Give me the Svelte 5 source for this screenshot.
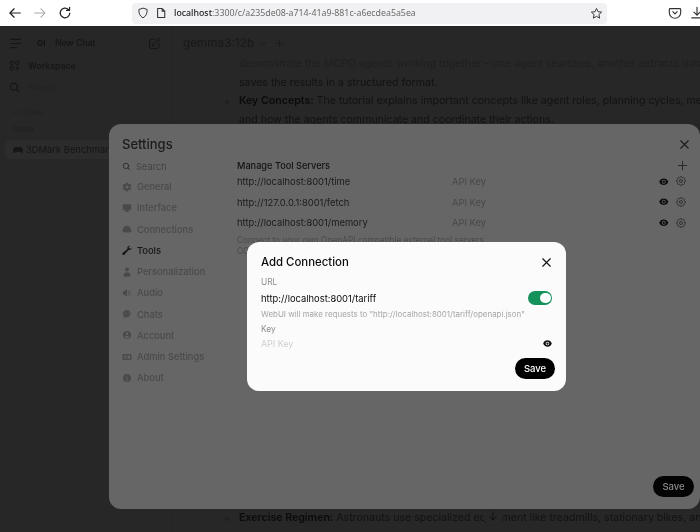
<script>
  const cog = "M7.84 1.804A1 1 0 0 1 8.82 1h2.36a1 1 0 0 1 .98.804l.331 1.652a6.993 6.993 0 0 1 1.929 1.115l1.598-.54a1 1 0 0 1 1.186.447l1.18 2.044a1 1 0 0 1-.205 1.251l-1.267 1.113a7.047 7.047 0 0 1 0 2.228l1.267 1.113a1 1 0 0 1 .206 1.25l-1.18 2.045a1 1 0 0 1-1.187.447l-1.598-.54a6.993 6.993 0 0 1-1.929 1.115l-.33 1.652a1 1 0 0 1-.98.804H8.82a1 1 0 0 1-.98-.804l-.331-1.652a6.993 6.993 0 0 1-1.929-1.115l-1.598.54a1 1 0 0 1-1.186-.447l-1.18-2.044a1 1 0 0 1 .205-1.251l1.267-1.114a7.05 7.05 0 0 1 0-2.227L1.821 7.773a1 1 0 0 1-.206-1.25l1.18-2.045a1 1 0 0 1 1.187-.447l1.598.54A6.992 6.992 0 0 1 7.51 3.456l.33-1.652ZM10 13a3 3 0 1 0 0-6 3 3 0 0 0 0 6Z";
  const nav = [
    { label: "General", d: cog },
    { label: "Interface", d: "M3 2.500h14A1.500 1.500 0 0 1 18.500 4v9a1.500 1.500 0 0 1-1.500 1.500h-4.500V16.500H14V18H6v-1.500h1.500v-2H3A1.500 1.500 0 0 1 1.500 13V4A1.500 1.500 0 0 1 3 2.500Z" },
    { label: "Connections", d: "M1 12.500A4.500 4.500 0 0 0 5.500 17H15a4 4 0 0 0 1.060-7.860 3.750 3.750 0 0 0-4.800-4.620 5 5 0 0 0-8.200 4.100A4.500 4.500 0 0 0 1 12.500Z" },
    { label: "Tools", active: true, d: "M19 5.500a4.500 4.500 0 0 1-4.790 4.490c-.85-.07-1.470.06-1.770.42l-7.150 8.690a2.550 2.550 0 1 1-3.590-3.590l8.690-7.150c.36-.3.49-.92.42-1.770A4.500 4.500 0 0 1 16.500 1.600l-3 3a.5.5 0 0 0 0 .7l2.200 2.200a.5.5 0 0 0 .7 0l2.300-2.300c.2.1.3.2.3.3Z" },
    { label: "Personalization", d: "M10 9a4 4 0 1 0 0-8 4 4 0 0 0 0 8ZM3 17.400a7 7 0 0 1 14 0 1 1 0 0 1-.5.9A15 15 0 0 1 10 19.500a15 15 0 0 1-6.500-1.200 1 1 0 0 1-.5-.9Z" },
    { label: "Audio", d: "M10 3.750a.75.75 0 0 0-1.260-.55L5.200 6.500H3.200c-.6 0-1.100.3-1.300.9A8 8 0 0 0 1.500 10c0 .9.15 1.800.4 2.600.2.6.7.9 1.300.9h2l3.540 3.300A.75.75 0 0 0 10 16.250V3.750ZM12.500 6.500a5 5 0 0 1 0 7l-1-1a3.600 3.600 0 0 0 0-5l1-1ZM15 4a8.500 8.500 0 0 1 0 12l-1-1a7 7 0 0 0 0-10l1-1Z" },
    { label: "Chats", evenodd: true, d: "M10 2c-4.420 0-8 3.360-8 7.500 0 1.700.6 3.260 1.620 4.520-.14.9-.6 1.900-1.400 2.700a.5.5 0 0 0 .38.83c1.700 0 3.100-.6 4.100-1.300.7.16 1.500.25 2.300.25 4.420 0 8-3.360 8-7S14.420 2 10 2ZM6.500 10.500a1 1 0 1 1 0-2 1 1 0 0 1 0 2Zm3.500 0a1 1 0 1 1 0-2 1 1 0 0 1 0 2Zm3.500 0a1 1 0 1 1 0-2 1 1 0 0 1 0 2Z" },
    { label: "Account", d: "M18 10a8 8 0 1 1-16 0 8 8 0 0 1 16 0Zm-5.500-2.500a2.500 2.500 0 1 1-5 0 2.500 2.500 0 0 1 5 0ZM10 12a5.990 5.990 0 0 0-4.790 2.400A6.480 6.480 0 0 0 10 16.500a6.480 6.480 0 0 0 4.790-2.100A5.990 5.990 0 0 0 10 12Z", evenodd: true },
    { label: "Admin Settings", d: "M2.500 4h15A1.500 1.500 0 0 1 19 5.500v9a1.500 1.500 0 0 1-1.500 1.500h-15A1.500 1.500 0 0 1 1 14.500v-9A1.500 1.500 0 0 1 2.500 4ZM4 7v2.500h5V7H4Zm0 4v2.500h5V11H4Zm7-4v6.500h5V7h-5Z", evenodd: true },
    { label: "About", d: "M18 10a8 8 0 1 1-16 0 8 8 0 0 1 16 0Zm-7-4a1 1 0 1 1-2 0 1 1 0 0 1 2 0ZM9 9a.75.75 0 0 0 0 1.500h.25v3.250H9a.75.75 0 0 0 0 1.500h2a.75.75 0 0 0 0-1.500h-.25V9.750A.75.75 0 0 0 10 9H9Z", evenodd: true }
  ];
  const servers = ["http://localhost:8001/time", "http://127.0.0.1:8001/fetch", "http://localhost:8001/memory"];
  const eyeA = "M10 12.5a2.5 2.5 0 1 0 0-5 2.5 2.5 0 0 0 0 5Z";
  const eyeB = "M.664 10.59a1.651 1.651 0 0 1 0-1.186A10.004 10.004 0 0 1 10 3c4.257 0 7.893 2.66 9.336 6.41.147.381.147.804 0 1.186A10.004 10.004 0 0 1 10 17c-4.257 0-7.893-2.66-9.336-6.41ZM14 10a4 4 0 1 1-8 0 4 4 0 0 1 8 0Z";
  const gear = "M10.343 3.94c.09-.542.56-.94 1.11-.94h1.093c.55 0 1.02.398 1.11.94l.149.894c.07.424.384.764.78.93.398.164.855.142 1.205-.108l.737-.527a1.125 1.125 0 0 1 1.45.12l.773.774c.39.389.44 1.002.12 1.45l-.527.737c-.25.35-.272.806-.107 1.204.165.397.505.71.93.78l.893.15c.543.09.94.559.94 1.109v1.094c0 .55-.397 1.02-.94 1.11l-.894.149c-.424.07-.764.383-.929.78-.165.398-.143.854.107 1.204l.527.738c.32.447.269 1.06-.12 1.45l-.774.773a1.125 1.125 0 0 1-1.449.12l-.738-.527c-.35-.25-.806-.272-1.203-.107-.398.165-.71.505-.781.929l-.149.894c-.09.542-.56.94-1.11.94h-1.094c-.55 0-1.019-.398-1.11-.94l-.148-.894c-.071-.424-.384-.764-.781-.93-.398-.164-.854-.142-1.204.108l-.738.527c-.447.32-1.06.269-1.45-.12l-.773-.774a1.125 1.125 0 0 1-.12-1.45l.527-.737c.25-.35.272-.806.108-1.204-.165-.397-.506-.71-.93-.78l-.894-.15c-.542-.09-.94-.56-.94-1.11v-1.094c0-.55.398-1.02.94-1.11l.894-.149c.424-.07.765-.383.93-.78.165-.398.143-.854-.108-1.204l-.526-.738a1.125 1.125 0 0 1 .12-1.45l.773-.773a1.125 1.125 0 0 1 1.45-.12l.737.527c.35.25.807.272 1.204.107.397-.165.71-.505.78-.929l.15-.894Z";
</script>

{#snippet eye(cls)}
  <svg class={cls} viewBox="0 0 20 20" fill="currentColor"><path d={eyeA} /><path fill-rule="evenodd" clip-rule="evenodd" d={eyeB} /></svg>
{/snippet}

{#snippet cross(cls)}
  <svg class={cls} viewBox="0 0 24 24" fill="none" stroke="currentColor" stroke-width="1.800" stroke-linecap="round"><path d="M6 6l12 12M18 6L6 18" /></svg>
{/snippet}

<div class="app">
  <header class="toolbar">
    <div class="tbtns">
      <svg class="ti" viewBox="0 0 16 16" fill="none" stroke="#222" stroke-width="1.400" stroke-linecap="round" stroke-linejoin="round"><path d="M14 8H2.500M7 3.200 2.200 8 7 12.800" /></svg>
      <svg class="ti" viewBox="0 0 16 16" fill="none" stroke="#a8a8a8" stroke-width="1.200" stroke-linecap="round" stroke-linejoin="round"><path d="M2 8h11.500M9 3.200 13.800 8 9 12.800" /></svg>
      <svg class="ti" viewBox="0 0 16 16" fill="none" stroke="#222" stroke-width="1.400" stroke-linecap="round" stroke-linejoin="round"><path d="M13.500 8A5.500 5.500 0 1 1 11.800 4M13.200 1.500V5H9.800" /></svg>
    </div>
    <div class="urlbar">
      <svg class="ui" viewBox="0 0 16 16" fill="none" stroke="#333" stroke-width="1.300" stroke-linejoin="round"><path d="M8 1.500 13.500 3.300c.2 5.500-1.500 9-5.500 11.200C4 12.300 2.300 8.800 2.500 3.300L8 1.500Z" /></svg>
      <svg class="ui" viewBox="0 0 16 16" fill="none" stroke="#333" stroke-width="1.400" stroke-linejoin="round"><path d="M3.500 2h6L13 5.500V14H3.500V2ZM9.500 2v3.500H13" /></svg>
      <span class="url"><b>localhost</b>:3300/c/a235de08-a714-41a9-881c-a6ecdea5a5ea</span>
      <svg class="star" viewBox="0 0 16 16" fill="none" stroke="#333" stroke-width="1.200" stroke-linejoin="round"><path d="m8 1.800 1.900 4 4.400.5-3.300 3 .9 4.400L8 11.500l-3.900 2.200.9-4.400-3.300-3 4.400-.5L8 1.800Z" /></svg>
    </div>
    <div class="tright">
      <svg class="ti" viewBox="0 0 16 16" fill="none" stroke="#333" stroke-width="1.300" stroke-linecap="round" stroke-linejoin="round"><path d="M2.500 3h11c.5 0 1 .4 1 1v3.500a6.500 6.500 0 0 1-13 0V4c0-.6.5-1 1-1ZM5.500 6.500 8 9l2.500-2.500" /></svg>
      <svg class="ti" viewBox="0 0 16 16" fill="none" stroke="#333" stroke-width="1.300" stroke-linecap="round" stroke-linejoin="round"><path d="M8 1.500v9M4.500 7 8 10.500 11.500 7M2 13.500h12" /></svg>
    </div>
  </header>

  <div class="shell">
    <aside class="side">
      <div class="s-top">
        <svg class="s-ham" viewBox="0 0 16 12" fill="none" stroke="#151515" stroke-width="1.300" stroke-linecap="round"><path d="M1 1.500h10M1 6h10M1 10.500h6" /></svg>
        <span class="oi">OI</span>
        <span class="newchat">New Chat</span>
        <svg class="s-edit" viewBox="0 0 24 24" fill="none" stroke="#151515" stroke-width="1.800" stroke-linecap="round" stroke-linejoin="round"><path d="M12 4H6a3 3 0 0 0-3 3v11a3 3 0 0 0 3 3h11a3 3 0 0 0 3-3v-6" /><path d="M18.500 3a2.100 2.100 0 0 1 3 3L12 15.500l-4 1 1-4L18.500 3Z" /></svg>
      </div>
      <div class="s-row work">
        <svg class="s-ic" viewBox="0 0 16 16" fill="none" stroke="#151515" stroke-width="1.500"><rect x="1.500" y="1.500" width="5" height="5" rx="2.500" /><rect x="9.500" y="1.500" width="5" height="5" rx="2.500" /><rect x="1.500" y="9.500" width="5" height="5" rx="2.500" /><path d="M12 9.500v5M9.500 12h5" stroke-linecap="round" /></svg>
        <span>Workspace</span>
      </div>
      <div class="s-row srch">
        <svg class="s-ic" viewBox="0 0 16 16" fill="none" stroke="#151515" stroke-width="1.600" stroke-linecap="round"><circle cx="7" cy="7" r="5" /><path d="m11 11 3.500 3.500" /></svg>
        <span>Search</span>
      </div>
      <div class="s-chats">
        <svg class="s-chev" viewBox="0 0 12 12" fill="none" stroke="#202020" stroke-width="1.200" stroke-linecap="round" stroke-linejoin="round"><path d="m2 4 4 4 4-4" /></svg>
        <span>Chats</span>
      </div>
      <div class="s-today">Today</div>
      <div class="s-item">
        <svg class="pad" viewBox="0 0 20 14" fill="#161616"><path d="M5 1h10c2.500 0 4 2 4.500 6 .4 3.500 0 6-1.800 6-1.500 0-2.500-2.500-4.200-2.500h-7C4.800 10.500 3.800 13 2.300 13 .5 13 .1 10.500.5 7 1 3 2.500 1 5 1Z" /></svg>
        <span>3DMark Benchmark</span>
      </div>
    </aside>

    <main class="chat">
      <div class="c-head">
        <span class="model">gemma3:12b</span>
        <svg class="c-chev" viewBox="0 0 12 12" fill="none" stroke="#1a1a1a" stroke-width="1.300" stroke-linecap="round" stroke-linejoin="round"><path d="m3 4.500 3 3 3-3" /></svg>
        <svg class="c-plus" viewBox="0 0 12 12" fill="none" stroke="#1a1a1a" stroke-width="1.200" stroke-linecap="round"><path d="M6 2v8M2 6h8" /></svg>
      </div>
      <div class="msgs">
        <div class="m-top">
          <p class="faded">demonstrate the MCPO agents working together – one agent searches, another extracts data, and</p>
          <p>saves the results in a structured format.</p>
          <p class="li"><b>Key Concepts:</b> The tutorial explains important concepts like agent roles, planning cycles, memory,</p>
          <p>and how the agents communicate and coordinate their actions.</p>
        </div>
        <p class="li bottom"><b>Exercise Regimen:</b> Astronauts use specialized equipment like treadmills, stationary bikes, and</p>
      </div>
    </main>
  </div>

  <div class="scrollbtn">
    <svg viewBox="0 0 16 16" fill="none" stroke="#0e0e0e" stroke-width="1.300" stroke-linecap="round" stroke-linejoin="round"><path d="M8 2.500v11M3.500 9 8 13.500 12.500 9" /></svg>
  </div>

  <section class="settings">
    <div class="set-head">
      <span>Settings</span>
      {@render cross("set-x")}
    </div>
    <div class="set-body">
      <nav class="nav">
        <div class="nav-search">
          <svg viewBox="0 0 16 16" fill="none" stroke="#2a2a2a" stroke-width="1.500" stroke-linecap="round"><circle cx="7" cy="7" r="4.800" /><path d="m10.500 10.500 3.500 3.500" /></svg>
          <span>Search</span>
        </div>
        {#each nav as item}
          <div class="nav-item" class:active={item.active}>
            <svg viewBox="0 0 20 20" fill="currentColor"><path fill-rule={item.evenodd ? "evenodd" : "nonzero"} d={item.d} /></svg>
            <span>{item.label}</span>
          </div>
        {/each}
      </nav>
      <div class="tools">
        <div class="t-head">
          <span>Manage Tool Servers</span>
          <svg viewBox="0 0 12 12" fill="none" stroke="#2a2a2a" stroke-width="1.100" stroke-linecap="round"><path d="M6 1.500v9M1.500 6h9" /></svg>
        </div>
        <div class="t-rows">
          {#each servers as s}
            <div class="t-row">
              <span class="t-url">{s}</span>
              <span class="t-key">API Key</span>
              {@render eye("t-eye")}
              <svg class="t-gear" viewBox="0 0 24 24" fill="none" stroke="currentColor" stroke-width="1.500"><path d={gear} /><circle cx="12" cy="12" r="3" /></svg>
            </div>
          {/each}
        </div>
        <p class="t-desc">Connect to your own OpenAPI compatible external tool servers. CORS must be properly configured by the provider to allow requests from Open WebUI.</p>
      </div>
    </div>
    <button class="set-save">Save</button>
  </section>

  <section class="add">
    <div class="a-head">
      <span>Add Connection</span>
      {@render cross("a-x")}
    </div>
    <label class="a-label" for="a-url">URL</label>
    <div class="a-urlrow">
      <input id="a-url" class="a-url" value="http://localhost:8001/tariff" />
      <span class="toggle"><i></i></span>
    </div>
    <p class="a-help">WebUI will make requests to "http://localhost:8001/tariff/openapi.json"</p>
    <label class="a-label key" for="a-key">Key</label>
    <div class="a-keyrow">
      <input id="a-key" class="a-key" placeholder="API Key" />
      {@render eye("a-eye")}
    </div>
    <div class="a-foot"><button class="a-save">Save</button></div>
  </section>
</div>

<style>
  :global(body) { margin: 0; background: #272727; }
  * { box-sizing: border-box; }
  .app { position: relative; width: 700px; height: 532px; overflow: hidden; display: flex; flex-direction: column; font-family: Inter, "Liberation Sans", sans-serif; background: #272727; filter: blur(0.3px); }
  svg { display: block; flex: none; }
  p { margin: 0; }

  .toolbar { height: 26px; flex: none; background: #fff; display: flex; align-items: center; padding-left: 8px; }
  .tbtns { display: flex; gap: 11px; width: 124px; flex: none; }
  .ti { width: 14px; height: 14px; }
  .urlbar { width: 475px; height: 21px; flex: none; background: #f1f1f3; border-radius: 4px; display: flex; align-items: center; padding: 0 4.500px 0 5px; gap: 6px; }
  .ui { width: 12px; height: 12px; }
  .url { font-family: "Noto Sans", sans-serif; font-size: 8.800px; color: #6b6b6b; margin-left: 1px; white-space: nowrap; flex: 1; }
  .url b { font-weight: 500; color: #1c1c1c; }
  .star { width: 13px; height: 13px; }
  .tright { display: flex; gap: 8px; margin-left: 61px; flex: none; }

  .shell { flex: 1; display: flex; min-height: 0; }
  .side { width: 172px; flex: none; border-right: 1px solid #242424; padding: 10px 0 0 0; display: flex; flex-direction: column; }
  .s-top { display: flex; align-items: center; height: 14px; padding-left: 10px; }
  .s-ham { width: 15px; height: 11px; }
  .oi { font-size: 8px; font-weight: 700; color: #121212; margin-left: 12px; width: 18px; }
  .newchat { font-size: 8.700px; font-weight: 500; color: #141414; flex: 1; }
  .s-edit { width: 13px; height: 13px; margin-right: 10px; }
  .s-row { display: flex; align-items: center; gap: 8px; padding-left: 9px; height: 14px; font-size: 8.800px; font-weight: 500; color: #141414; }
  .s-ic { width: 11px; height: 11px; }
  .work { margin-top: 8px; }
  .srch { margin-top: 8px; font-weight: 400; color: #232323; }
  .s-chats { display: flex; align-items: center; gap: 2px; padding-left: 10px; margin-top: 12px; height: 12px; font-size: 7.800px; font-weight: 500; color: #222; }
  .s-chev { width: 9px; height: 9px; }
  .s-today { padding-left: 12px; margin-top: 6px; height: 12px; font-size: 7.500px; font-weight: 500; color: #202020; line-height: 12px; }
  .s-item { margin: 4px 0 0 5px; height: 19px; background: #2c2c2c; border-radius: 6px; display: flex; align-items: center; gap: 3px; padding-left: 8px; font-size: 9.400px; color: #141414; white-space: nowrap; overflow: hidden; }
  .pad { width: 10px; height: 8px; }

  .chat { flex: 1; min-width: 0; display: flex; flex-direction: column; overflow: hidden; }
  .c-head { height: 16px; margin-top: 9px; padding-left: 11px; display: flex; align-items: center; flex: none; white-space: nowrap; }
  .model { font-size: 11.600px; font-weight: 500; color: #1a1a1a; }
  .c-chev { width: 9px; height: 9px; margin-left: 4.500px; }
  .c-plus { width: 9px; height: 9px; margin-left: 7px; }
  .msgs { flex: 1; min-height: 0; display: flex; flex-direction: column; justify-content: space-between; padding: 4px 0 5px 67px; font-size: 10.600px; line-height: 18.700px; color: #121212; white-space: nowrap; }
  .m-top { display: flex; flex-direction: column; }
  .faded { color: #1f1f1f; }
  .li { position: relative; }
  .li::before { content: ""; position: absolute; left: -14px; top: 8px; width: 3.500px; height: 3.500px; border-radius: 50%; background: #212121; }
  .msgs b { font-weight: 600; color: #0b0b0b; }
  .bottom { height: 18px; }

  .scrollbtn { position: absolute; left: 483px; top: 506px; width: 20px; height: 20px; border-radius: 50%; background: #272727; display: flex; align-items: center; justify-content: center; }
  .scrollbtn svg { width: 12px; height: 12px; margin-top: -1px; }

  .settings { position: absolute; left: 109px; top: 124px; width: 591px; height: 385px; background: #666; border-radius: 12px; color: #141414; display: flex; flex-direction: column; padding: 0 8.500px 10px 13px; }
  .set-head { display: flex; align-items: center; justify-content: space-between; height: 20px; margin-top: 10px; font-size: 13px; font-weight: 500; color: #1a1a1a; }
  .set-head :global(.set-x) { width: 15px; height: 15px; color: #1a1a1a; }
  .set-body { display: flex; margin-top: 2px; flex: 1; min-height: 0; }
  .nav { width: 115px; flex: none; display: flex; flex-direction: column; }
  .nav-search { display: flex; align-items: center; gap: 5px; height: 20px; font-size: 9.300px; color: #444; }
  .nav-search svg { width: 9px; height: 9px; }
  .nav-item { display: flex; align-items: center; gap: 5px; height: 21.250px; font-size: 9.300px; font-weight: 500; color: #4a4a4a; }
  .nav-item svg { width: 10px; height: 10px; }
  .nav-item.active { color: #161616; }
  .tools { flex: 1; min-width: 0; display: flex; flex-direction: column; font-size: 9.400px; color: #1a1a1a; }
  .t-head { display: flex; justify-content: space-between; align-items: center; height: 18px; font-weight: 500; color: #121212; padding-right: 4px; }
  .t-head span { font-size: 9.200px; }
  .t-head svg { width: 11px; height: 11px; }
  .t-rows { display: flex; flex-direction: column; margin-top: -3px; }
  .t-row { display: flex; align-items: center; height: 20.700px; }
  .t-url { width: 215px; }
  .t-key { flex: 1; color: #484848; }
  .t-row :global(.t-eye) { width: 9.500px; height: 9.500px; color: #0e0e0e; margin-right: 6px; }
  .t-gear { width: 12px; height: 12px; color: #222; margin-right: 5px; }
  .t-desc { width: 250px; max-height: 21px; overflow: hidden; font-size: 8.300px; line-height: 10.500px; color: #4a4a4a; margin-top: 2px; }
  .set-save { position: absolute; right: 6px; bottom: 12px; width: 41px; height: 21px; border-radius: 11px; background: #040404; border: none; color: #8c8c8c; font: 500 9.500px Inter, sans-serif; padding: 0; }

  .add { position: absolute; left: 247px; top: 242px; width: 319px; height: 149px; background: #fbfbfb; border-radius: 12px; padding: 12px 14px 0 14px; display: flex; flex-direction: column; }
  .a-head { display: flex; align-items: center; justify-content: space-between; height: 16px; font-size: 11.400px; font-weight: 500; color: #0c0c0c; margin-right: -1.500px; }
  .a-head :global(.a-x) { width: 15px; height: 15px; color: #111; }
  .a-label { font-size: 8.400px; color: #8f8f8f; line-height: 12px; margin-top: 6px; }
  .a-urlrow { display: flex; align-items: center; height: 18px; margin-top: 1px; }
  input { border: none; background: none; outline: none; padding: 0; flex: 1; min-width: 0; font-family: inherit; }
  .a-url { font-size: 9.400px; color: #0a0a0a; }
  .toggle { width: 24px; height: 14px; border-radius: 7px; background: #15925c; display: flex; align-items: center; justify-content: flex-end; padding-right: 1.500px; }
  .toggle i { width: 10.500px; height: 10.500px; border-radius: 50%; background: #fff; }
  .a-help { font-size: 7.950px; color: #a5a5a5; line-height: 12px; margin-top: 1px; white-space: nowrap; }
  .key { margin-top: 3px; }
  .a-keyrow { display: flex; align-items: center; height: 16px; }
  .a-key { font-size: 8.900px; }
  .a-key::placeholder { color: #cfcfcf; opacity: 1; }
  .a-keyrow :global(.a-eye) { width: 9px; height: 9px; color: #111; }
  .a-foot { display: flex; justify-content: flex-end; margin-top: 7px; margin-right: -3px; }
  .a-save { width: 40px; height: 21px; border-radius: 11px; background: #000; color: #fff; border: none; padding: 0; font: 500 9.500px Inter, sans-serif; }
</style>
